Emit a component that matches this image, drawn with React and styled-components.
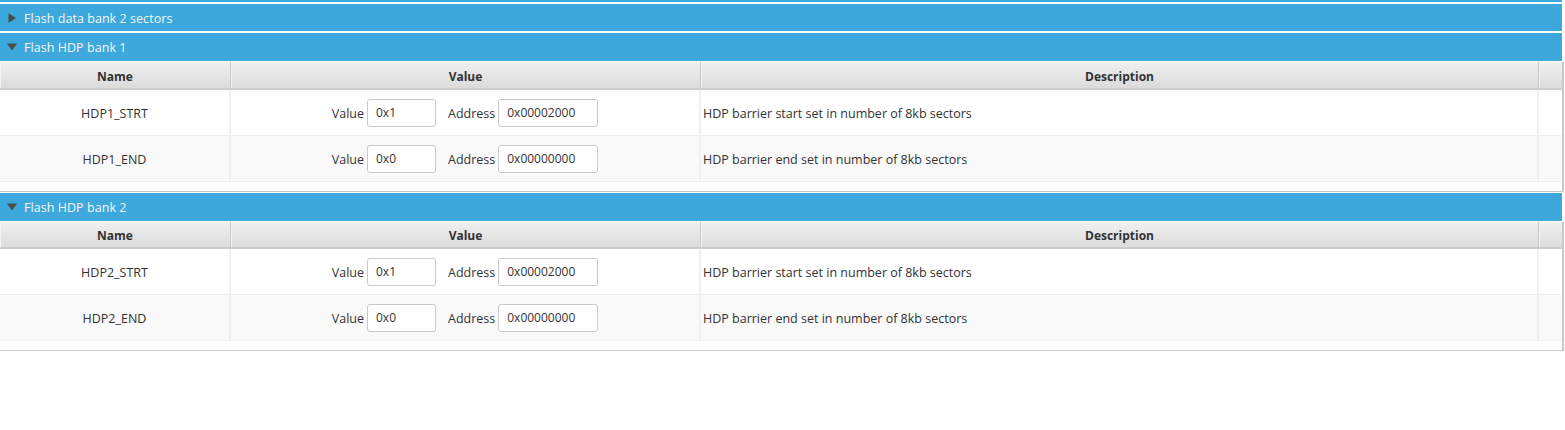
import React from 'react'
import styled, { createGlobalStyle } from 'styled-components'

const GlobalStyle = createGlobalStyle`
	html, body {
		margin: 0;
		padding: 0;
		background: #fff;
	}
	body {
		font-family: "Open Sans", "Noto Sans", sans-serif;
		color: #333;
	}
`

const BLUE = '#3ca8dc'

const Page = styled.div`
	width: 1565px;
	height: 430px;
	display: flex;
	flex-direction: column;
	background: #fff;
	overflow: hidden;
`

const TopStrip = styled.div`
	width: 1562px;
	height: 2px;
	background: ${BLUE};
	margin-bottom: 2px;
`

const Pane = styled.section`
	display: flex;
	flex-direction: column;
	margin-bottom: ${p => p.$gap}px;
`

const PaneHeader = styled.div`
	width: 1562px;
	height: ${p => p.$height}px;
	background: ${BLUE};
	display: flex;
	align-items: center;
	gap: 7px;
	padding: 1px 0 0 7px;
	box-sizing: border-box;
	color: #f5f7f9;
	font-size: 12.5px;
	letter-spacing: 0.05px;
	cursor: default;
`

const Arrow = styled.svg`
	width: 10px;
	height: 10px;
	flex: none;
	fill: #4b4b4b;
	margin-top: -1px;
`

const PaneBody = styled.div`
	width: 1562px;
	margin-top: 1px;
	padding-bottom: 9px;
	border-right: 2px solid #c8c8c8;
	border-bottom: 1px solid #c8c8c8;
`

const columns = '231px 470px 838px 23px'

const HeadRow = styled.div`
	display: grid;
	grid-template-columns: ${columns};
	height: ${p => p.$height}px;
	background: linear-gradient(#f0f0f0, #dbdbdb);
	border-bottom: 2px solid #cecece;
	box-sizing: border-box;
`

const HeadCell = styled.div`
	display: flex;
	align-items: center;
	justify-content: center;
	padding-top: 2px;
	font-size: 12px;
	font-weight: 700;
	color: #333;
	border-right: 1px solid #c6c6c6;
	box-shadow: inset 1px 0 0 #f4f4f4;
	&:last-child {
		border-right: none;
	}
`

const Row = styled.div`
	display: grid;
	grid-template-columns: ${columns};
	height: 46px;
	box-sizing: border-box;
	border-bottom: 1px solid #efefef;
	background: ${p => (p.$odd ? '#f9f9f9' : '#fff')};
`

const Cell = styled.div`
	display: flex;
	align-items: center;
	justify-content: ${p => p.$align || 'center'};
	padding-left: ${p => (p.$align === 'flex-start' ? '2px' : '0')};
	padding-top: 1px;
	font-size: 12.5px;
	color: #333;
	border-right: 2px solid #f0f0f0;
	&:last-child {
		border-right: none;
	}
`

const FieldLabel = styled.span`
	font-size: 12.5px;
	color: #333;
	margin-right: 3px;
`

const Field = styled.input`
	width: ${p => p.$width}px;
	height: 28px;
	box-sizing: border-box;
	border: 1px solid #c9c9c9;
	border-radius: 3px;
	background: #fff;
	padding: 0 0 0 8px;
	margin: -1px 12px 0 0;
	font-family: "Open Sans", "Noto Sans", sans-serif;
	font-size: 12px;
	color: #333;
	outline: none;
	&:last-child {
		margin-right: 0;
	}
`

const ArrowIcon = ({ open }) => (
	<Arrow viewBox="0 0 10 10">
		{open ? <polygon points="0,1.5 10,1.5 5,8.5" /> : <polygon points="1.5,0.3 9,5 1.5,9.7" />}
	</Arrow>
)

const banks = [
	{
		title: 'Flash HDP bank 1',
		head: 28,
		rows: [
			{ name: 'HDP1_STRT', value: '0x1', address: '0x00002000', description: 'HDP barrier start set in number of 8kb sectors' },
			{ name: 'HDP1_END', value: '0x0', address: '0x00000000', description: 'HDP barrier end set in number of 8kb sectors' }
		]
	},
	{
		title: 'Flash HDP bank 2',
		head: 27,
		rows: [
			{ name: 'HDP2_STRT', value: '0x1', address: '0x00002000', description: 'HDP barrier start set in number of 8kb sectors' },
			{ name: 'HDP2_END', value: '0x0', address: '0x00000000', description: 'HDP barrier end set in number of 8kb sectors' }
		]
	}
]

const OptionTable = ({ rows, head }) => (
	<PaneBody>
		<HeadRow $height={head}>
			<HeadCell>Name</HeadCell>
			<HeadCell>Value</HeadCell>
			<HeadCell>Description</HeadCell>
			<HeadCell />
		</HeadRow>
		{rows.map((row, index) => (
			<Row key={row.name} $odd={index % 2 === 1}>
				<Cell>{row.name}</Cell>
				<Cell>
					<FieldLabel>Value</FieldLabel>
					<Field $width={69} readOnly value={row.value} />
					<FieldLabel>Address</FieldLabel>
					<Field $width={100} readOnly value={row.address} />
				</Cell>
				<Cell $align="flex-start">{row.description}</Cell>
				<Cell />
			</Row>
		))}
	</PaneBody>
)

const App = () => (
	<Page>
		<GlobalStyle />
		<TopStrip />
		<Pane $gap={2}>
			<PaneHeader $height={27}>
				<ArrowIcon />
				<span>Flash data bank 2 sectors</span>
			</PaneHeader>
		</Pane>
		{banks.map(bank => (
			<Pane key={bank.title} $gap={1}>
				<PaneHeader $height={28}>
					<ArrowIcon open />
					<span>{bank.title}</span>
				</PaneHeader>
				<OptionTable rows={bank.rows} head={bank.head} />
			</Pane>
		))}
	</Page>
)

export default App
